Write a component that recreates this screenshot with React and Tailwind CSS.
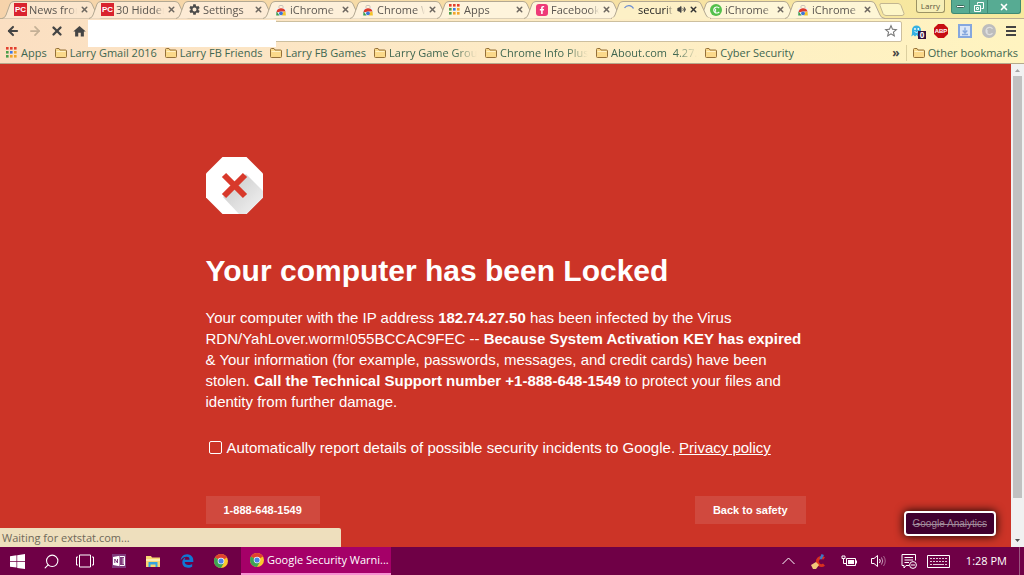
import { ArrowLeft, ArrowRight, X, Search, Volume2 } from 'lucide-react'
import { MdHome, MdSettings, MdStarBorder } from 'react-icons/md'
import { FaEdgeLegacy, FaFacebookF } from 'react-icons/fa'
import clsx from 'clsx'

const GRID_COLORS = ['#e2402f', '#e2402f', '#e2402f', '#4a9e4a', '#3b78e7', '#f0a52a', '#4a9e4a', '#f0a52a', '#f0a52a']

const TABS = [
  { title: 'News from', icon: PcIcon, tone: 'fill-[#fbe6cd]' },
  { title: '30 Hidden', icon: PcIcon, tone: 'fill-[#fce8d0]' },
  { title: 'Settings', icon: GearIcon, tone: 'fill-[#fdebd5]' },
  { title: 'iChrome', icon: StoreIcon, tone: 'fill-[#fdf0da]' },
  { title: 'Chrome W', icon: StoreIcon, tone: 'fill-[#fef2dc]' },
  { title: 'Apps', icon: AppsIcon, tone: 'fill-[#fef4dc]' },
  { title: 'Facebook', icon: FacebookIcon, tone: 'fill-[#fef4dc]' },
  { title: 'securit', icon: SpinnerIcon, tone: 'fill-[#fdf0c6]', active: true },
  { title: 'iChrome', icon: IcIcon, tone: 'fill-[#fef6d8]' },
  { title: 'iChrome', icon: StoreIcon, tone: 'fill-[#fef6d6]' },
]

const BOOKMARKS = [
  { label: 'Larry Gmail 2016' },
  { label: 'Larry FB Friends' },
  { label: 'Larry FB Games' },
  { label: 'Larry Game Group', fade: true },
  { label: 'Chrome Info Plus', fade: true },
  { label: 'About.com  4.27.', fade: true },
  { label: 'Cyber Security' },
]

function PcIcon() {
  return (
    <span className="flex h-[13px] w-[13px] items-center justify-center bg-[#d9232e] font-['Liberation_Sans'] text-[8px] font-bold leading-none text-white">
      PC
    </span>
  )
}

function GearIcon() {
  return <MdSettings className="h-[13px] w-[13px] text-[#4b4b4b]" />
}

function StoreIcon() {
  return (
    <svg viewBox="0 0 12 12" className="h-3 w-3">
      <path d="M4 4V2.400Q4 1.500 5 1.500h2Q8 1.500 8 2.400V4" fill="none" stroke="#c9c2ba" strokeWidth="1" />
      <path d="M1 4h10l.6 7.500H.4z" fill="#f1f1f1" />
      <path d="M1.500 8.500a4.600 4.600 0 0 1 9-1H6z" fill="#dd3b2c" />
      <path d="M1.500 7.500L4.600 11.500H1.200z" fill="#3a9d4c" />
      <path d="M10.500 7.500l.4 4H6.500l2-3.400z" fill="#f5c327" />
      <circle cx="6" cy="9.300" r="1.900" fill="#3d76d8" />
    </svg>
  )
}

function AppsIcon() {
  return (
    <svg viewBox="0 0 11 11" className="h-[11px] w-[11px]">
      {GRID_COLORS.map((c, i) => (
        <rect key={i} x={(i % 3) * 4} y={Math.floor(i / 3) * 4} width="2.6" height="2.6" fill={c} />
      ))}
    </svg>
  )
}

function FacebookIcon() {
  return (
    <span className="flex h-3 w-3 items-center justify-center rounded-[3px] bg-[#ee3a78]">
      <FaFacebookF className="h-2 w-2 text-white" />
    </span>
  )
}

function SpinnerIcon() {
  return (
    <svg viewBox="0 0 12 12" className="h-3 w-3">
      <path d="M1.500 4A5.200 5.200 0 0 1 10.500 4.500" fill="none" stroke="#6f8fd0" strokeWidth="1.300" />
    </svg>
  )
}

function IcIcon() {
  return (
    <svg viewBox="0 0 12 12" className="h-3 w-3">
      <circle cx="6" cy="6" r="6" fill="#54c04c" />
      <path d="M9.200 4.200a3 3 0 1 0 0 3.600" fill="none" stroke="#fff" strokeWidth="1.200" />
      <path d="M5.600 4.800v3" stroke="#fff" strokeWidth="1" />
    </svg>
  )
}

function ChromeIcon() {
  return (
    <svg viewBox="0 0 14 14" className="h-[14px] w-[14px] shrink-0">
      <circle cx="7" cy="7" r="7" fill="#fbc92d" />
      <path d="M7 7L.94 3.500A7 7 0 0 1 13.060 3.500z" fill="#e0412f" />
      <path d="M.94 3.500A7 7 0 0 0 7 14l3-5.200-3-1.800z" fill="#3fa354" />
      <circle cx="7" cy="7" r="3.300" fill="#fff" />
      <circle cx="7" cy="7" r="2.600" fill="#4a80e8" />
    </svg>
  )
}

function Folder() {
  return (
    <svg viewBox="0 0 12 10" className="h-[10px] w-3 shrink-0">
      <path d="M.5 8.500v-7q0-1 1-1H4l1 1.500h5.500q1 0 1 1v5.500q0 1-1 1h-9q-1 0-1-1z" fill="#fbd98a" stroke="#94703a" />
      <path d="M1.500 3.500h9" stroke="#fff0c4" />
    </svg>
  )
}

function Tab({ title, icon: Icon, tone, active }) {
  return (
    <div className={clsx('relative h-[19px] w-[87px] min-w-0', active && 'z-10')}>
      <svg viewBox="0 0 100 19" preserveAspectRatio="none" className="absolute top-0 left-0 h-[19px] w-[100px]">
        <path
          d="M0 18.500Q3 18 4 15L8 4Q9 1.500 12 1.500H86Q89 1.500 90 4L95 15Q96 18 100 18.500"
          className={tone}
          stroke="#b3a892"
          strokeWidth="1"
        />
        {active && <path d="M1 18.500H99" stroke="#fdf0c6" strokeWidth="2" />}
      </svg>
      <div className="relative flex h-[19px] items-center pl-3">
        <span className="flex w-[15px] shrink-0"><Icon /></span>
        <span
          className={clsx(
            'min-w-0 overflow-hidden whitespace-nowrap mask-r-from-80% text-[11px] leading-4',
            active ? 'w-[35px] text-[#222]' : 'w-12 text-[#5b5650]'
          )}
        >
          {title}
        </span>
        {active && <Volume2 className="ml-1 h-[9px] w-[9px] shrink-0 fill-[#444] text-[#444]" />}
        <button aria-label={`Close ${title}`} className="ml-auto flex shrink-0">
          <X className={clsx('h-[9px] w-[9px]', active ? 'text-[#333]' : 'text-[#6d6760]')} strokeWidth={4} />
        </button>
      </div>
    </div>
  )
}

function TabStrip() {
  return (
    <div className="flex h-[19px] border-b border-[#b9ab92] bg-linear-to-r from-[#f6d3ab] to-[#f7ea9e]">
      <div className="flex min-w-0 pl-[2px]">
        {TABS.map((t, i) => <Tab key={i} {...t} />)}
      </div>
      <button aria-label="New tab" className="ml-[7px] flex shrink-0 items-center">
        <svg viewBox="0 0 26 13" className="h-[13px] w-[26px]">
          <path d="M2 .5h17q2 0 3 2l3 8q0 2-2 2H7q-2 0-3-2L1 2.500Q.5.5 2 .5z" fill="#fdf6c8" stroke="#c2b691" />
        </svg>
      </button>
      <div className="ml-auto flex shrink-0 items-start pr-[3px]">
        <button className="mr-[6px] h-[13px] rounded-b-[3px] border border-t-0 border-[#9c9364] bg-[#f6eeb6] px-1 text-[8px] leading-3 text-[#5b5740]">
          Larry
        </button>
        <div className="flex h-[14px] overflow-hidden rounded-b-[3px] border border-t-0 border-[#3f8a74] bg-[#57ab93]">
          <button aria-label="Minimize" className="flex w-[18px] items-center justify-center border-r border-[#3f8a74]">
            <span className="h-[3px] w-[9px] rounded-xs border border-[#3a6659] bg-white" />
          </button>
          <button aria-label="Restore" className="flex w-[18px] items-center justify-center border-r border-[#3f8a74]">
            <svg viewBox="0 0 10 10" className="h-[10px] w-[10px]" fill="none" stroke="#fff">
              <path d="M3.500 2.500v-2h6v6h-2M.5 3.500h6v6h-6z" />
              <path d="M2.500 5.500h2v2h-2z" />
            </svg>
          </button>
          <button aria-label="Close window" className="flex w-8 items-center justify-center">
            <X className="h-[10px] w-[10px] text-white" strokeWidth={4} />
          </button>
        </div>
      </div>
    </div>
  )
}

function Toolbar() {
  return (
    <div className="flex h-6 items-center pl-[6px] pr-2">
      <div className="flex w-[82px] shrink-0 items-center gap-2">
        <button aria-label="Back"><ArrowLeft className="h-[14px] w-[14px] text-[#444]" strokeWidth={3.5} /></button>
        <button aria-label="Forward"><ArrowRight className="h-[14px] w-[14px] text-[#c4b096]" strokeWidth={3} /></button>
        <button aria-label="Stop"><X className="h-[14px] w-[14px] text-[#444]" strokeWidth={4} /></button>
        <button aria-label="Home"><MdHome className="h-[15px] w-[15px] text-[#444]" /></button>
      </div>
      <div className="relative flex h-[21px] min-w-0 flex-1 items-center rounded-xs border border-[#cdbf9e] bg-white pr-[2px]">
        <input aria-label="Address" className="min-w-0 flex-1 bg-transparent text-[11px] outline-none" />
        <button aria-label="Bookmark this page"><MdStarBorder className="h-4 w-4 text-[#777]" /></button>
        <span className="absolute -top-[2px] -left-px h-[27px] w-[188px] bg-white" />
      </div>
      <div className="ml-2 flex shrink-0 items-center gap-[10px]">
        <button aria-label="Ghostery" className="relative">
          <svg viewBox="0 0 14 14" className="h-[14px] w-[14px]">
            <path d="M2 6a4.500 4.500 0 0 1 9 0v6l-1.500-1.200L8 12.500l-1.500-1.500L5 12.500l-1.500-1.500L1 12.500Q2 11 2 9z" fill="#35b1e2" />
            <circle cx="5" cy="5" r=".9" fill="#fff" />
            <circle cx="8.300" cy="5" r=".9" fill="#fff" />
            <path d="M4.500 7.500q2 2 4 0" fill="none" stroke="#fff" strokeWidth=".8" />
          </svg>
          <span className="absolute top-[7px] left-[8px] flex h-2 w-2 items-center justify-center bg-[#33123f] text-[8px] font-bold leading-none text-white">0</span>
        </button>
        <button aria-label="Adblock Plus">
          <svg viewBox="0 0 14 14" className="h-[14px] w-[14px]">
            <path d="M4.100 0h5.800L14 4.100v5.800L9.900 14H4.100L0 9.900V4.100z" fill="#c70d12" />
            <text x="7" y="9.200" textAnchor="middle" fontSize="6" fontWeight="bold" fill="#fff" fontFamily="Liberation Sans">ABP</text>
          </svg>
        </button>
        <button aria-label="Downloads">
          <svg viewBox="0 0 14 14" className="h-[14px] w-[14px]" fill="none" stroke="#85a7de">
            <rect x="1" y="1" width="12" height="12" fill="#dbe6f6" strokeWidth="2" />
            <path d="M7 3.500v5M4.700 6.500L7 9l2.300-2.500M4 10.500h6" strokeWidth="1.400" />
          </svg>
        </button>
        <button aria-label="iChrome">
          <svg viewBox="0 0 14 14" className="h-[14px] w-[14px]">
            <circle cx="7" cy="7" r="7" fill="#bdbdbd" />
            <path d="M10.500 4.800a3.600 3.600 0 1 0 0 4.400M5 6v3" fill="none" stroke="#dedede" strokeWidth="1.300" />
          </svg>
        </button>
        <button aria-label="Menu" className="flex w-[10px] flex-col gap-[2px]">
          <span className="h-[2px] bg-[#444]" />
          <span className="h-[2px] bg-[#444]" />
          <span className="h-[2px] bg-[#444]" />
        </button>
      </div>
    </div>
  )
}

function BookmarkBar() {
  return (
    <div className="flex h-[21px] items-center border-b border-[#b5a98c] px-[6px] pb-px text-[11px] leading-4 whitespace-pre text-[#3f6650]">
      <a href="#apps" className="mr-2 flex shrink-0 items-center gap-1"><AppsIcon />Apps</a>
      <div className="flex min-w-0 items-center gap-2 overflow-hidden">
        {BOOKMARKS.map((b) => (
          <a key={b.label} href="#bookmark" className="flex shrink-0 items-center gap-[3px]">
            <Folder />
            <span className={clsx(b.fade && 'max-w-[88px] overflow-hidden mask-r-from-75%')}>{b.label}</span>
          </a>
        ))}
      </div>
      <button aria-label="More bookmarks" className="ml-auto shrink-0 text-xs leading-4 font-bold text-[#444]">»</button>
      <a href="#other" className="ml-[6px] flex shrink-0 items-center gap-[3px] border-l border-[#dccf9f] pl-[6px]"><Folder />Other bookmarks</a>
    </div>
  )
}

function StopSign() {
  return (
    <svg viewBox="0 0 57 57" className="h-[57px] w-[57px]">
      <defs>
        <linearGradient id="shade" x1="0" y1="0" x2="1" y2="1">
          <stop offset="0.2" stopColor="#cfcfcf" />
          <stop offset="1" stopColor="#f4f4f4" />
        </linearGradient>
      </defs>
      <path d="M16.500 0h24L57 16.500v24L40.500 57h-24L0 40.500v-24z" fill="#fff" />
      <path d="M40 17L57 34v6.500L40.500 57H33L17 40z" fill="url(#shade)" />
      <path d="M18 18l21 21M39 18L18 39" stroke="#d8392b" strokeWidth="6" />
    </svg>
  )
}

function WarningPage() {
  return (
    <main className="flex-1 px-4 pt-[93px] text-white">
      <div className="mx-auto max-w-[600px]">
        <StopSign />
        <h1 className="mt-[39px] text-[30px] leading-9 font-bold">Your computer has been Locked</h1>
        <p className="mt-[18px] text-[15px] leading-[21px]">
          Your computer with the IP address <b>182.74.27.50</b> has been infected by the Virus
          RDN/YahLover.worm!055BCCAC9FEC -- <b>Because System Activation KEY has expired</b> &amp;
          Your information (for example, passwords, messages, and credit cards) have been
          stolen. <b>Call the Technical Support number +1-888-648-1549</b> to protect your files and
          identity from further damage.
        </p>
        <div className="mt-[25px] flex items-center pl-[3px] text-[15px] leading-[21px]">
          <input id="report" type="checkbox" className="mr-[5px] h-[13px] w-[13px] appearance-none rounded-xs border border-white" />
          <label htmlFor="report" className="mr-1">Automatically report details of possible security incidents to Google.</label>
          <a href="#privacy" className="underline">Privacy policy</a>
        </div>
        <div className="mt-[38px] flex justify-between text-[11px] font-bold">
          <button className="h-7 bg-[#d0493e] px-[18px]">1-888-648-1549</button>
          <button className="h-7 bg-[#d0493e] px-[18px]">Back to safety</button>
        </div>
      </div>
    </main>
  )
}

function Scrollbar() {
  return (
    <div className="flex w-[13px] shrink-0 flex-col items-center justify-between bg-[#f1f1f1]">
      <svg viewBox="0 0 13 12" className="h-3 w-[13px]"><path d="M4 8l2.500-3L9 8z" fill="#a3a3a3" /></svg>
      <div className="flex w-full flex-1 flex-col px-[2px]">
        <span className="h-[92%] bg-[#c1c1c1]" />
      </div>
      <svg viewBox="0 0 13 12" className="h-3 w-[13px]"><path d="M4 4l2.500 3L9 4z" fill="#505050" /></svg>
    </div>
  )
}

function TaskButton({ label, children }) {
  return <button aria-label={label} className="flex h-full w-[34px] items-center justify-center">{children}</button>
}

function Taskbar() {
  return (
    <footer className="flex h-7 shrink-0 items-center bg-[#6f0046] text-white">
      <TaskButton label="Start">
        <svg viewBox="0 0 15 15" className="h-[15px] w-[15px]" fill="#fff">
          <path d="M0 2.200L6.500 1.300V7H0zM7.200 1.200L15 0v7H7.200zM0 7.800h6.500v5.800L0 12.700zM7.200 7.800H15V15l-7.800-1.100z" />
        </svg>
      </TaskButton>
      <TaskButton label="Search"><Search className="h-[17px] w-[17px] -scale-x-100" strokeWidth={1.5} /></TaskButton>
      <TaskButton label="Task view">
        <svg viewBox="0 0 18 14" className="h-[14px] w-[18px]" fill="none" stroke="#fff">
          <path d="M3.500 1h11v12h-11zM2 3H.5v8H2M16 3h1.500v8H16" />
        </svg>
      </TaskButton>
      <TaskButton label="OneNote">
        <svg viewBox="0 0 14 14" className="h-[14px] w-[14px]">
          <rect width="14" height="14" fill="#80397b" />
          <path d="M1 3l6.500-1.200v10.400L1 11z" fill="#fff" />
          <path d="M8 2.500h4.500v9H8" fill="none" stroke="#fff" />
          <path d="M10.500 5h2M10.500 7h2M10.500 9h2" stroke="#fff" />
          <path d="M2.800 9V5l2.700 4V5" fill="none" stroke="#80397b" />
        </svg>
      </TaskButton>
      <TaskButton label="File Explorer">
        <svg viewBox="0 0 14 13" className="h-[13px] w-[14px]">
          <path d="M0 1h5l1 1.500h8V12H0z" fill="#f7d673" />
          <path d="M0 4h14v2H0z" fill="#fdeeb0" />
          <path d="M2.500 12V7h9v5H9.500V9.500h-5V12z" fill="#35a5e0" />
        </svg>
      </TaskButton>
      <TaskButton label="Edge"><FaEdgeLegacy className="h-[14px] w-[14px] text-[#0f78d4]" /></TaskButton>
      <TaskButton label="Chrome"><ChromeIcon /></TaskButton>
      <button className="ml-[3px] flex h-full w-[150px] items-center gap-[3px] border-b-2 border-[#f58fd0] bg-[#a50068] pl-[9px] text-[11px] whitespace-nowrap">
        <ChromeIcon />Google Security Warni...
      </button>
      <div className="ml-auto flex h-full items-center">
        <button aria-label="Show hidden icons" className="flex w-[30px] justify-center">
          <svg viewBox="0 0 13 8" className="h-2 w-[13px]" fill="none" stroke="#fff"><path d="M.5 7l6-6 6 6" /></svg>
        </button>
        <span className="flex w-[30px] justify-center">
          <svg viewBox="0 0 15 15" className="h-[15px] w-[15px]">
            <path d="M13 4.500A4 4 0 1 0 13 10.500" fill="none" stroke="#d9301f" strokeWidth="3" />
            <path d="M8.500 5l2-5 2.500 1-2.500 4.500z" fill="#3c78c8" />
            <path d="M0 11l5-3 3 3-3 4H2z" fill="#f2c679" />
          </svg>
        </span>
        <span className="flex w-[30px] justify-center">
          <svg viewBox="0 0 16 12" className="h-3 w-4">
            <path d="M5.500 3.500h9v7h-9z" fill="none" stroke="#fff" />
            <path d="M7 5h6v4H7z" fill="#fff" />
            <path d="M15 5.500h1v3h-1z" fill="#fff" />
            <path d="M1 1h3v2.500H1zM2.500 3.500V8.500H5" fill="none" stroke="#fff" />
          </svg>
        </span>
        <span className="flex w-[30px] justify-center">
          <svg viewBox="0 0 16 14" className="h-[14px] w-4" fill="none" stroke="#fff">
            <path d="M.5 4.500H3L6.500 1.500v11L3 9.500H.5z" />
            <path d="M8.500 5q1.500 2 0 4" />
            <path d="M10.500 3.500q2.500 3.500 0 7" opacity=".6" />
            <path d="M12.500 2q3.500 5 0 10" opacity=".4" />
          </svg>
        </span>
        <button aria-label="Notifications" className="flex w-[30px] justify-center">
          <svg viewBox="0 0 16 16" className="h-4 w-4" fill="none" stroke="#fff">
            <path d="M8 12.500H5L3 15v-2.500H1v-11h13.500v6M3.500 4.500H12M3.500 7H12M3.500 9.500H8" />
            <circle cx="12" cy="12" r="3.400" />
            <path d="M10 12h4" />
          </svg>
        </button>
        <button aria-label="Touch keyboard" className="flex w-[30px] justify-center">
          <svg viewBox="0 0 23 13" className="h-[13px] w-[23px]" fill="none" stroke="#fff">
            <path d="M.5.5h22v12H.5z" />
            <path d="M3 3.500h17M3 6.500h17" strokeDasharray="2 1" opacity=".8" />
            <path d="M3 9.500h2M6 9.500h11M18 9.500h2" opacity=".8" />
          </svg>
        </button>
        <time className="ml-3 text-[11px]">1:28 PM</time>
        <span className="ml-3 h-full w-[5px] border-l border-[#9a5580]" />
      </div>
    </footer>
  )
}

export default function App() {
  return (
    <div className="flex h-screen flex-col overflow-hidden bg-[#cc3427] font-['Open_Sans',sans-serif]">
      <header className="shrink-0 bg-linear-to-r from-[#fbdfc2] via-[#fdebc6] to-[#fff4c0]">
        <TabStrip />
        <Toolbar />
        <BookmarkBar />
      </header>
      <div className="relative flex min-h-0 flex-1 font-['Liberation_Sans',sans-serif]">
        <WarningPage />
        <Scrollbar />
        <div className="absolute bottom-0 left-0 h-[19px] w-1/3 rounded-tr-xs bg-[#eedfbd] pl-[2px] font-['Open_Sans',sans-serif] text-[11px] leading-[19px] text-[#6f6959]">
          Waiting for extstat.com...
        </div>
        <div className="absolute right-7 bottom-[11px] rounded-[4px] border-2 border-white bg-[#40002f] px-[7px] text-[10px] leading-[21px] text-[#a08a9a] line-through shadow-[0_0_10px_#000]">
          Google Analytics
        </div>
      </div>
      <Taskbar />
    </div>
  )
}
